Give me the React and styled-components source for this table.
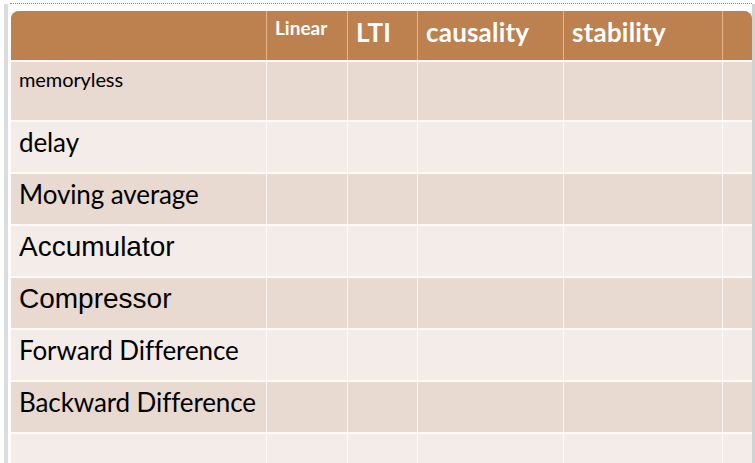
import styled, { createGlobalStyle } from "styled-components";

const GlobalStyle = createGlobalStyle`
  html, body {
    margin: 0;
    padding: 0;
    background: #fff;
    overflow: hidden;
  }
`;

const StyledPage = styled.div`
  width: 755px;
  height: 463px;
  padding-top: 3px;
  box-sizing: border-box;
  overflow: hidden;
`;

const StyledRule = styled.div`
  margin: 0 3px 0 10px;
  border-top: 1px dotted #8c8c8c;
`;

const StyledFrame = styled.div`
  margin-left: 4px;
  padding: 7px 0 0 3px;

  border-left: 4px solid #dcdcdc;
  border-right: 3px solid #d2d2d2;
`;

const StyledTable = styled.div`
  width: 741px;

  display: flex;
  flex-direction: column;
  gap: 2px;

  background-color: #fdfaf8;
`;

const rowColors = {
  header: { bg: "#bd814f", line: "#e6b488" },
  dark: { bg: "#e8d9d1", line: "#fbf7f4" },
  light: { bg: "#f4ece8", line: "#fcf9f7" },
};

const StyledRow = styled.div`
  height: ${({ $height }) => $height}px;

  display: grid;
  grid-template-columns: 255px 80px 69px 145px 158px 29px;
  column-gap: 1px;

  background-color: ${({ $variant }) => rowColors[$variant].line};
  border-radius: ${({ $variant }) => ($variant === "header" ? "8px 8px 0 0" : "0")};
  overflow: hidden;
`;

const StyledCell = styled.div`
  padding: 4px 0 0 8px;
  box-sizing: border-box;
  overflow: hidden;
  white-space: nowrap;

  background-color: ${({ $variant }) => rowColors[$variant].bg};
`;

const StyledHeadText = styled.div`
  font-family: Lato, "Open Sans", sans-serif;
  font-weight: 700;
  font-size: ${({ $small }) => ($small ? "19px" : "26px")};
  line-height: ${({ $small }) => ($small ? "26px" : "34px")};
  letter-spacing: ${({ $small }) => ($small ? "0" : "0.2px")};

  color: #fff;
`;

const StyledLabel = styled.div`
  font-family: ${({ $arial }) =>
    $arial ? '"Liberation Sans", Arial, sans-serif' : 'Lato, "Open Sans", sans-serif'};
  font-size: ${({ $size }) => $size}px;
  line-height: ${({ $arial }) => ($arial ? 1.2 : 1.3)};
  letter-spacing: ${({ $arial }) => ($arial ? "0" : "-0.1px")};

  color: #000;
`;

const headers = [
  { text: "", small: false },
  { text: "Linear", small: true },
  { text: "LTI", small: false },
  { text: "causality", small: false },
  { text: "stability", small: false },
  { text: "", small: false },
];

const rows = [
  { label: "memoryless", size: 20, height: 58, variant: "dark" },
  { label: "delay", size: 26, height: 50, variant: "light" },
  { label: "Moving average", size: 26, height: 50, variant: "dark" },
  { label: "Accumulator", size: 28, height: 50, variant: "light", arial: true },
  { label: "Compressor", size: 28, height: 50, variant: "dark", arial: true },
  { label: "Forward Difference", size: 26, height: 50, variant: "light" },
  { label: "Backward Difference", size: 26, height: 50, variant: "dark" },
  { label: "", size: 26, height: 50, variant: "light" },
];

const App = () => {
  return (
    <StyledPage>
      <GlobalStyle />
      <StyledRule />

      <StyledFrame>
        <StyledTable>
          <StyledRow $variant="header" $height={49}>
            {headers.map((h, i) => (
              <StyledCell key={i} $variant="header">
                <StyledHeadText $small={h.small}>{h.text}</StyledHeadText>
              </StyledCell>
            ))}
          </StyledRow>

          {rows.map((row, i) => (
            <StyledRow key={i} $variant={row.variant} $height={row.height}>
              <StyledCell $variant={row.variant}>
                <StyledLabel $size={row.size} $arial={row.arial}>
                  {row.label}
                </StyledLabel>
              </StyledCell>
              {[0, 1, 2, 3, 4].map((c) => (
                <StyledCell key={c} $variant={row.variant} />
              ))}
            </StyledRow>
          ))}
        </StyledTable>
      </StyledFrame>
    </StyledPage>
  );
};

export default App;
